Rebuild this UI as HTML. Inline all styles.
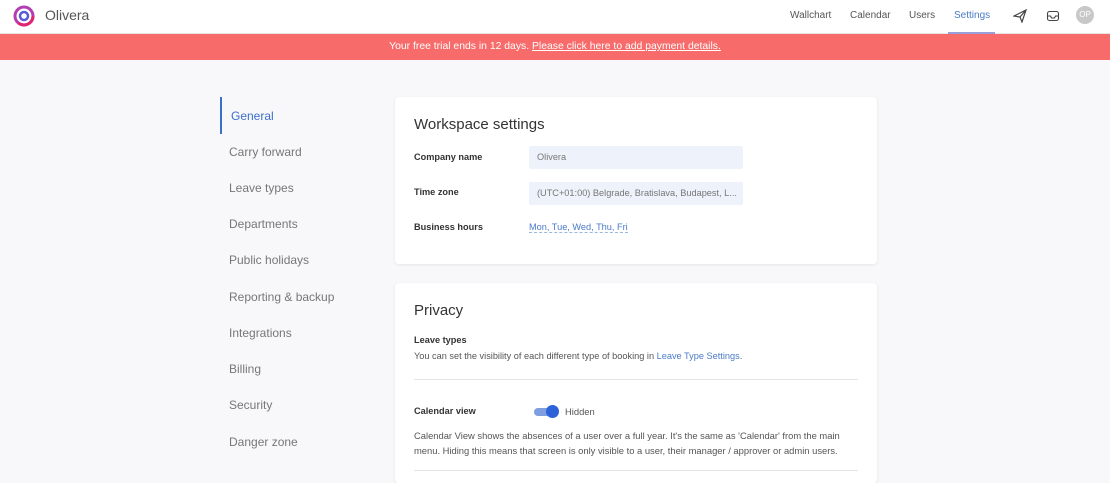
<!DOCTYPE html>
<html><head><style>
*{margin:0;padding:0;box-sizing:border-box}
body{width:1110px;height:477px;overflow:hidden;background:#f8f8fa;font-family:"Liberation Sans",sans-serif;color:#333;position:relative}
.hdr{position:absolute;top:0;left:0;width:1110px;height:34px;background:#fff;border-bottom:1px solid #e6e6e6}
.logo{position:absolute;left:45px;top:7px;font-size:14px;color:#555}
.nav{position:absolute;top:10px;font-size:10px;color:#555}
.banner{position:absolute;top:34px;left:0;width:1110px;height:26px;background:#f76b6a;color:#fff;font-size:10.4px;text-align:center;line-height:26px}
.banner u{text-decoration:underline}
.side{position:absolute;left:229px;font-size:12px;color:#777}
.card{position:absolute;left:395px;width:482px;background:#fff;border-radius:4px;box-shadow:0 1px 3px rgba(0,0,0,.08)}
.t{position:absolute;font-size:9px}
.b{font-weight:bold;color:#333;font-size:9.2px}
.inp{position:absolute;left:134px;width:214px;height:23px;background:#edf2fb;border-radius:2px;font-size:9.2px;color:#777;padding-left:8px;line-height:23px}
</style></head><body>
<div class="hdr">
<svg style="position:absolute;left:13px;top:5px" width="22" height="22" viewBox="0 0 22 22"><circle cx="11" cy="11" r="9" fill="none" stroke="#b23fb0" stroke-width="3"/><circle cx="11" cy="11" r="9" fill="none" stroke="#e0266f" stroke-width="3" stroke-dasharray="20 60"/><circle cx="11" cy="11" r="4" fill="none" stroke="#5a5ad6" stroke-width="2.5"/></svg>
<div class="logo">Olivera</div>
<div class="nav" style="left:790px">Wallchart</div>
<div class="nav" style="left:850px">Calendar</div>
<div class="nav" style="left:909px">Users</div>
<div class="nav" style="left:954px;color:#4a7bc8">Settings</div>
<div style="position:absolute;left:948px;top:32px;width:47px;height:2px;background:#9a9ed8"></div>
<svg style="position:absolute;left:1013px;top:9px" width="14" height="14" viewBox="0 0 14 14"><path d="M1 7L13 1L9 13L7 8Z M7 8L13 1" fill="none" stroke="#444" stroke-width="1.2"/></svg>
<svg style="position:absolute;left:1046px;top:9px" width="14" height="14" viewBox="0 0 14 14"><rect x="1.5" y="2.5" width="11" height="9" rx="2" fill="none" stroke="#444" stroke-width="1.1"/><path d="M1.5 7h3l1 2h3l1-2h3" fill="none" stroke="#444" stroke-width="1.1"/></svg>
<div style="position:absolute;left:1076px;top:6px;width:18px;height:18px;border-radius:50%;background:#c8c8c8;color:#fff;font-size:8px;text-align:center;line-height:18px">OP</div>
</div>
<div class="banner">Your free trial ends in 12 days. <u>Please click here to add payment details.</u></div>
<div style="position:absolute;left:220px;top:97px;width:2px;height:37px;background:#3b6fc8"></div>
<div class="side" style="top:109px;left:231px;color:#3b6fc8">General</div>
<div class="side" style="top:145px">Carry forward</div>
<div class="side" style="top:181px">Leave types</div>
<div class="side" style="top:217px">Departments</div>
<div class="side" style="top:253px">Public holidays</div>
<div class="side" style="top:290px">Reporting &amp; backup</div>
<div class="side" style="top:326px">Integrations</div>
<div class="side" style="top:362px">Billing</div>
<div class="side" style="top:398px">Security</div>
<div class="side" style="top:435px">Danger zone</div>
<div class="card" style="top:97px;height:167px">
<div class="t" style="left:19px;top:19px;font-size:15px;color:#333">Workspace settings</div>
<div class="t b" style="left:19px;top:55px">Company name</div>
<div class="inp" style="top:49px">Olivera</div>
<div class="t b" style="left:19px;top:90px">Time zone</div>
<div class="inp" style="top:85px">(UTC+01:00) Belgrade, Bratislava, Budapest, L...</div>
<div class="t b" style="left:19px;top:125px">Business hours</div>
<div class="t" style="left:134px;top:125px;color:#4a7bc8;border-bottom:1px dashed #9bb5e0;font-size:9.2px">Mon, Tue, Wed, Thu, Fri</div>
</div>
<div class="card" style="top:283px;height:200px">
<div class="t" style="left:19px;top:19px;font-size:15px;color:#333">Privacy</div>
<div class="t b" style="left:19px;top:52px">Leave types</div>
<div class="t" style="left:19px;top:68px;color:#555;font-size:9.2px">You can set the visibility of each different type of booking in <span style="color:#4a7bc8">Leave Type Settings</span>.</div>
<div style="position:absolute;left:19px;top:96px;width:444px;height:1px;background:#e4e4e4"></div>
<div class="t b" style="left:19px;top:123px">Calendar view</div>
<div style="position:absolute;left:139px;top:125px;width:20px;height:8px;border-radius:4px;background:#7f9ee0"></div>
<div style="position:absolute;left:151px;top:122px;width:13px;height:13px;border-radius:50%;background:#2d63d8"></div>
<div class="t" style="left:170px;top:123px;color:#555;font-size:9.4px">Hidden</div>
<div class="t" style="left:19px;top:145px;color:#555;width:452px;line-height:15px;font-size:9.4px">Calendar View shows the absences of a user over a full year. It's the same as 'Calendar' from the main menu. Hiding this means that screen is only visible to a user, their manager / approver or admin users.</div>
<div style="position:absolute;left:19px;top:187px;width:444px;height:1px;background:#e4e4e4"></div>
</div>
</body></html>
